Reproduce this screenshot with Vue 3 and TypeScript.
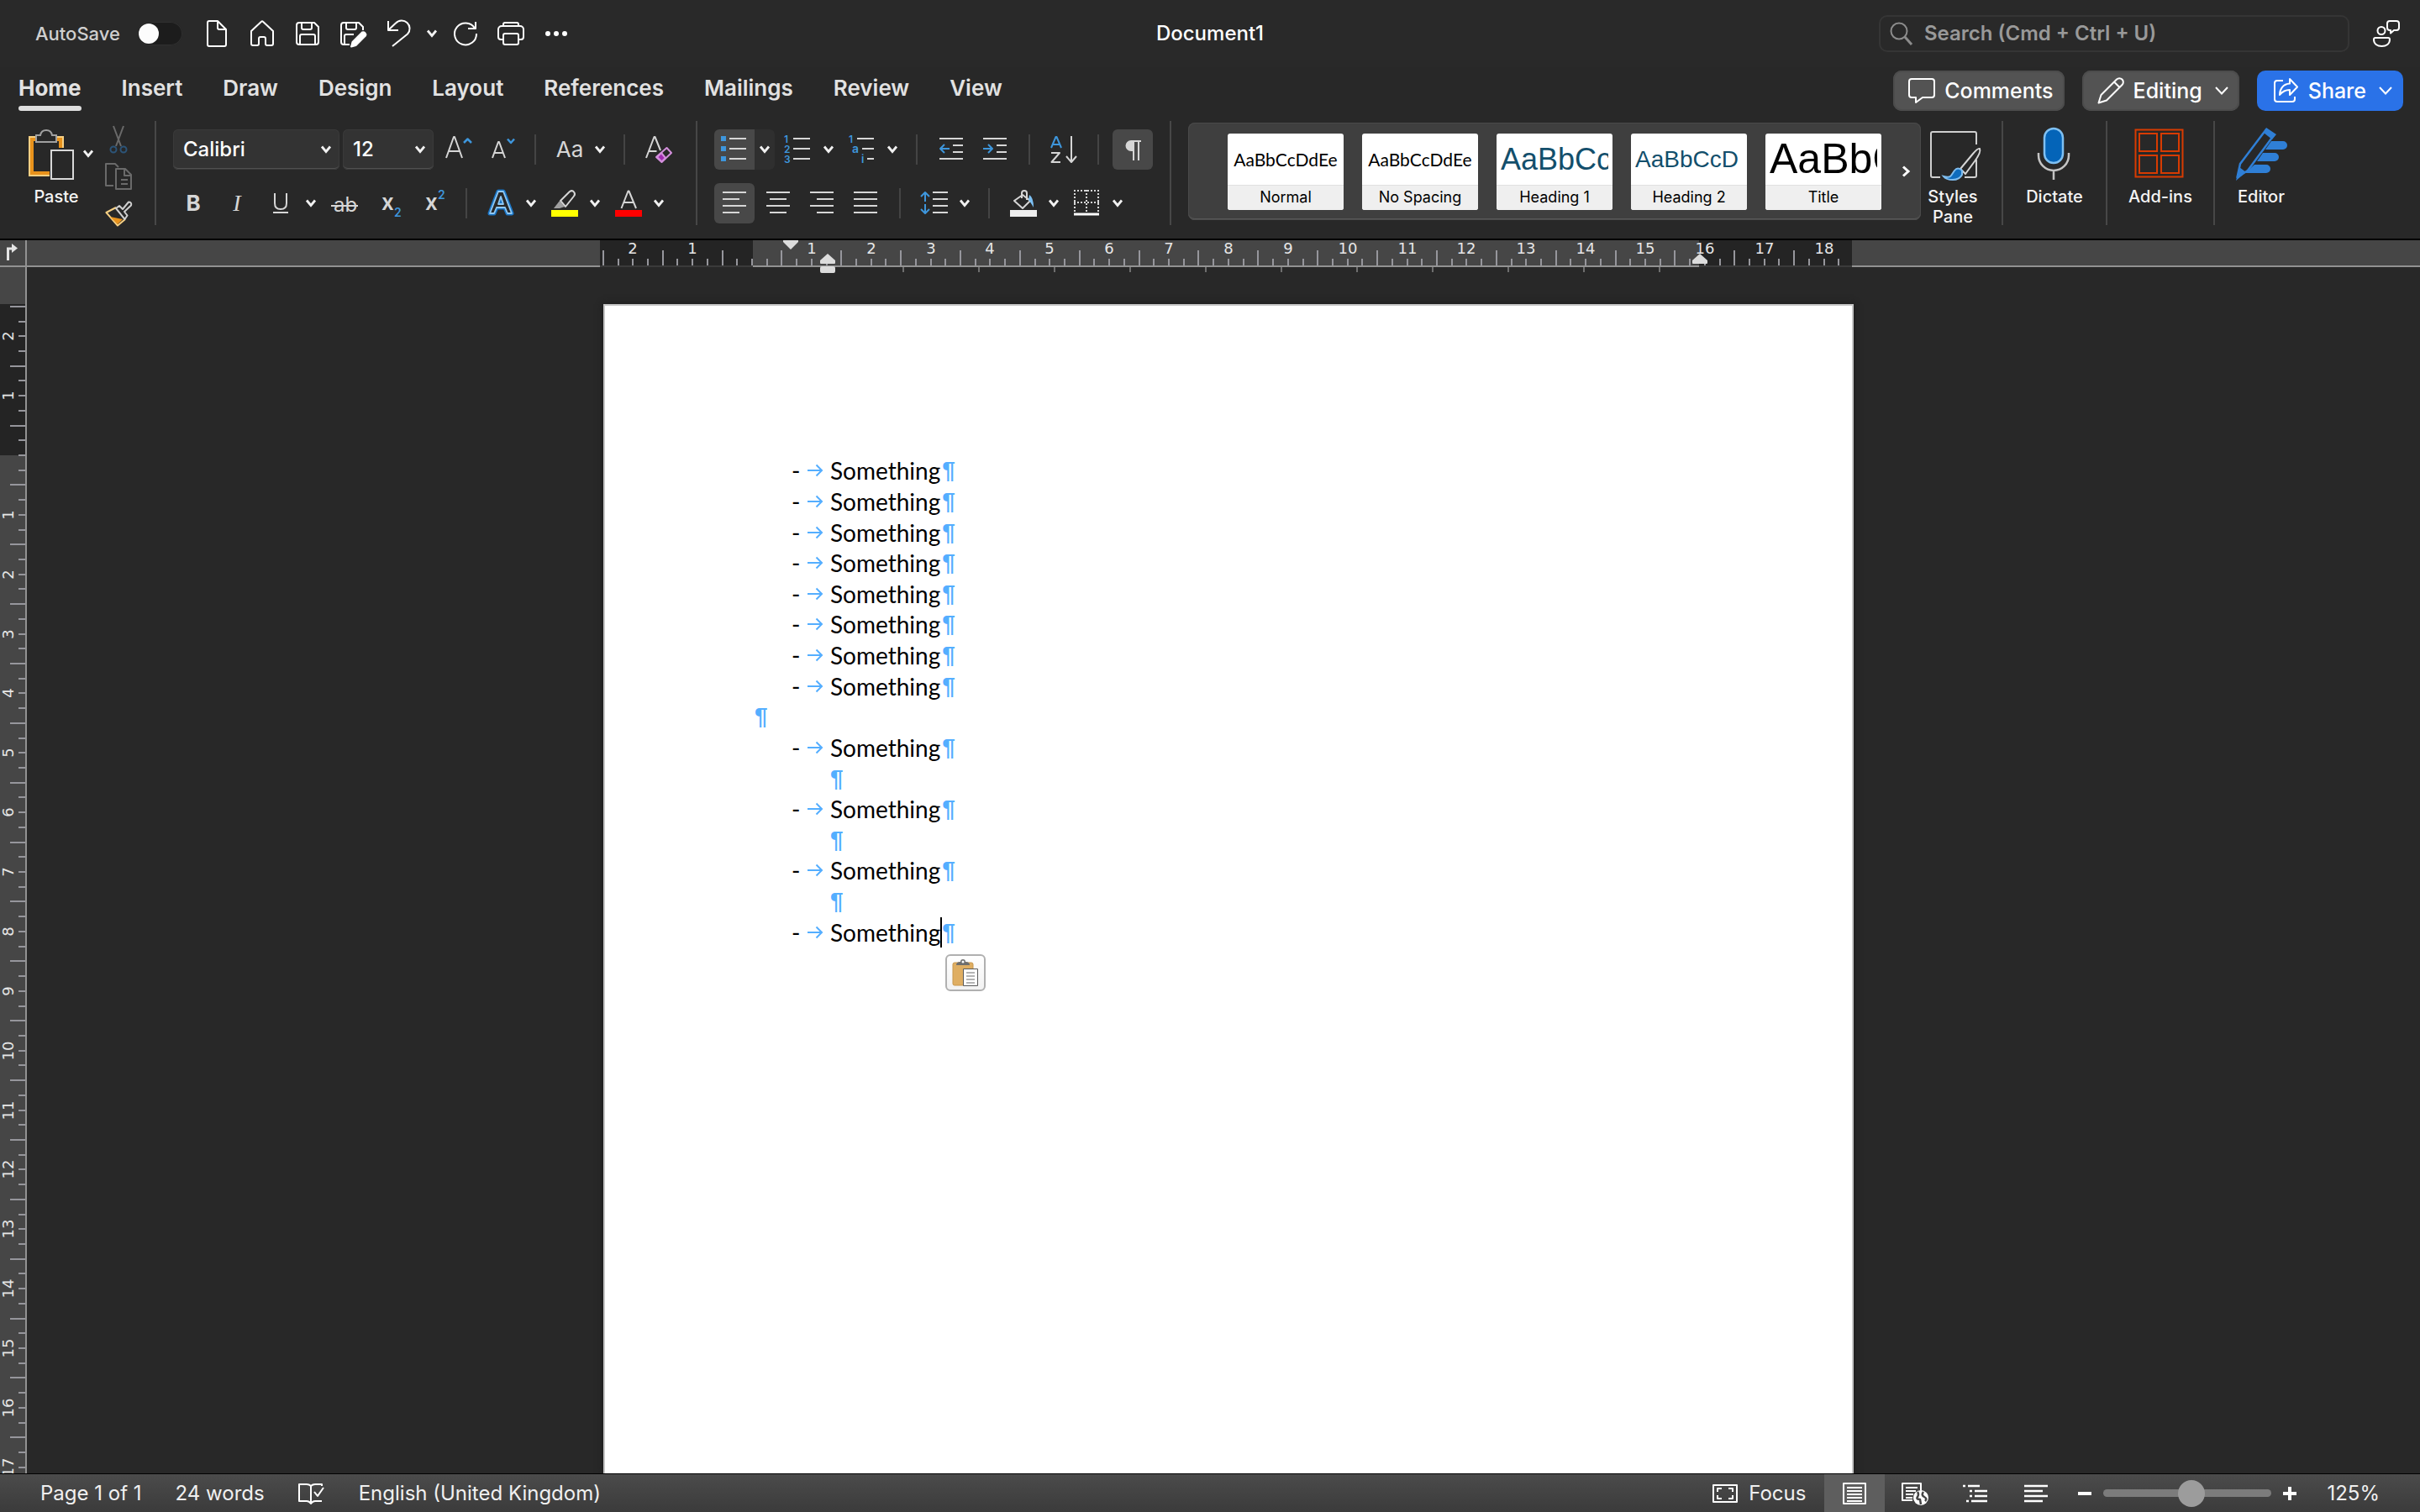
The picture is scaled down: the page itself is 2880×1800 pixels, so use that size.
<script setup lang="ts">
import { h, ref, type FunctionalComponent } from 'vue'

const Chevron: FunctionalComponent = () =>
  h('svg', { class: 'chevron', viewBox: '0 0 14 10', 'aria-hidden': 'true' }, [
    h('path', { d: 'M2 1.5 7 7.5 12 1.5', fill: 'none', stroke: 'currentColor', 'stroke-width': 2.8 }),
  ])

const tabs = ['Home', 'Insert', 'Draw', 'Design', 'Layout', 'References', 'Mailings', 'Review', 'View']
const activeTab = ref('Home')

const styleCards = [
  { name: 'Normal', sample: 'AaBbCcDdEe', look: 'body' },
  { name: 'No Spacing', sample: 'AaBbCcDdEe', look: 'body' },
  { name: 'Heading 1', sample: 'AaBbCc', look: 'h1' },
  { name: 'Heading 2', sample: 'AaBbCcD', look: 'h2' },
  { name: 'Title', sample: 'AaBbC', look: 'title' },
]

type Line = { kind: 'item' | 'blank' | 'indented'; caret?: boolean }
const item: Line = { kind: 'item' }
const lines: Line[] = [
  ...Array.from({ length: 8 }, () => item),
  { kind: 'blank' },
  item,
  { kind: 'indented' },
  item,
  { kind: 'indented' },
  item,
  { kind: 'indented' },
  { kind: 'item', caret: true },
]

/* One centimetre on screen at 125 % zoom. */
const CM = 1800 / 25.4

function ticks(from: number, to: number) {
  const out: { at: number; long: boolean }[] = []
  for (let q = from * 4; q <= to * 4; q++) {
    out.push({ at: Math.round((q / 4) * CM), long: Math.abs(q % 4) === 2 })
  }
  return out
}
function labels(from: number, to: number) {
  const out: { at: number; text: number }[] = []
  for (let n = from; n <= to; n++) {
    if (n !== 0) out.push({ at: Math.round(n * CM), text: Math.abs(n) })
  }
  return out
}
const hTicks = ticks(-2.5, 18.25)
const hLabels = labels(-2, 18)
const vTicks = ticks(-2.5, 17.5)
const vLabels = labels(-2, 17)
const tabStops = Array.from({ length: 11 }, (_, i) => 180 + i * 90)

const autoSave = ref(false)
const font = ref('Calibri')
const fontSize = ref('12')
const zoom = ref(53)
</script>

<template>
  <div class="app">
    <header class="titlebar">
      <div class="quick">
        <label class="autosave">
          <span>AutoSave</span>
          <input v-model="autoSave" type="checkbox" role="switch" class="switch" />
        </label>
        <div class="quick-icons">
          <button aria-label="New document">
            <svg class="i" viewBox="0 0 32 32"><path d="M7 1h10l10 10v18a2 2 0 0 1-2 2H7a2 2 0 0 1-2-2V3a2 2 0 0 1 2-2zM17 1v8a2 2 0 0 0 2 2h8" /></svg>
          </button>
          <button aria-label="Home">
            <svg class="i" viewBox="0 0 32 32"><path d="M3 13 15 1.700q1-1 2 0L29 13v15a2 2 0 0 1-2 2h-5a2 2 0 0 1-2-2v-6a2 2 0 0 0-2-2h-4a2 2 0 0 0-2 2v6a2 2 0 0 1-2 2H5a2 2 0 0 1-2-2z" /></svg>
          </button>
          <button aria-label="Save">
            <svg class="i" viewBox="0 0 32 32"><path d="M6 3h18l5 5v18a3 3 0 0 1-3 3H6a3 3 0 0 1-3-3V6a3 3 0 0 1 3-3zM9 3v6a2 2 0 0 0 2 2h8a2 2 0 0 0 2-2V3M7 29V19a2 2 0 0 1 2-2h14a2 2 0 0 1 2 2v10" /></svg>
          </button>
          <button aria-label="Save as">
            <svg class="i" viewBox="0 0 32 32"><path d="M12 29H5a3 3 0 0 1-3-3V6a3 3 0 0 1 3-3h18l5 5v4M8 3v6a2 2 0 0 0 2 2h8a2 2 0 0 0 2-2V3M6 29V19a2 2 0 0 1 2-2h9" /><path d="M27 14.500a3 3 0 0 1 4 4L19.500 30l-5.500 1.500 1.500-5.500z" fill="#fff" /></svg>
          </button>
          <button aria-label="Undo">
            <svg class="i" viewBox="0 0 32 32"><path d="M4 1v11h12M4.500 11.500 13 3.500a9.500 9.500 0 0 1 14 13L9 31" /></svg>
          </button>
          <button class="narrow" aria-label="Undo history"><Chevron /></button>
          <button aria-label="Redo">
            <svg class="i" viewBox="0 0 32 32"><path d="M28 2v8h-9M27 9.500A13 13 0 1 0 29 16" /></svg>
          </button>
          <button aria-label="Print">
            <svg class="i" viewBox="0 0 32 32"><path d="M7 23H4a3 3 0 0 1-3-3V11a4 4 0 0 1 4-4h22a4 4 0 0 1 4 4v9a3 3 0 0 1-3 3h-3M7 7V5a2 2 0 0 1 2-2h14a2 2 0 0 1 2 2v2M9 16h14a2 2 0 0 1 2 2v9a2 2 0 0 1-2 2H9a2 2 0 0 1-2-2v-9a2 2 0 0 1 2-2z" /></svg>
          </button>
          <button aria-label="More commands">
            <svg class="i" viewBox="0 0 32 32"><g fill="#fff" stroke="none"><circle cx="6" cy="16" r="3" /><circle cx="16" cy="16" r="3" /><circle cx="26" cy="16" r="3" /></g></svg>
          </button>
        </div>
      </div>
      <h1>Document1</h1>
      <div class="title-right">
        <label class="search">
          <svg class="i grey" viewBox="0 0 32 32"><circle cx="12" cy="13" r="9.500" /><path d="m19 20 8 9" stroke-width="3" /></svg>
          <input type="search" aria-label="Search" placeholder="Search (Cmd + Ctrl + U)" />
        </label>
        <button class="people" aria-label="Presence">
          <svg class="i" viewBox="0 0 32 32"><circle cx="10" cy="12.500" r="4.500" /><path d="M3 21h15a2 2 0 0 1 2 2c0 5-4 8-9.500 8S1 28 1 23a2 2 0 0 1 2-2zM20 1h8a3 3 0 0 1 3 3v5a3 3 0 0 1-3 3h-3l-4 3.500V12h-1a3 3 0 0 1-3-3V4a3 3 0 0 1 3-3z" /></svg>
        </button>
      </div>
    </header>

    <nav class="tabbar">
      <div class="tabs">
        <button v-for="t in tabs" :key="t" :class="{ active: t === activeTab }" @click="activeTab = t">{{ t }}</button>
      </div>
      <div class="actions">
        <button class="pill">
          <svg class="i" viewBox="0 0 32 32"><path d="M4 2h24a3 3 0 0 1 3 3v16a3 3 0 0 1-3 3H17l-8 6v-6H4a3 3 0 0 1-3-3V5a3 3 0 0 1 3-3z" /></svg>
          Comments
        </button>
        <button class="pill">
          <svg class="i" viewBox="0 0 32 32"><path d="M23 2.500a4.500 4.500 0 0 1 6.500 6.500L11 27.500 1.500 30.500 4.500 21zM20 5.500l6.500 6.500" /></svg>
          Editing
          <svg class="thin" viewBox="0 0 16 10"><path d="m1 1 7 7.500L15 1" /></svg>
        </button>
        <button class="pill share">
          <svg class="i" viewBox="0 0 32 32"><path d="M13 4H6a3 3 0 0 0-3 3v19a3 3 0 0 0 3 3h18a3 3 0 0 0 3-3v-3M21 2l9 9.500-9 9.500v-6c-5 0-8.500 1.500-12 6C9 14 13 8 21 7.500z" /></svg>
          Share
          <svg class="thin" viewBox="0 0 16 10"><path d="m1 1 7 7.500L15 1" /></svg>
        </button>
      </div>
    </nav>

    <section class="ribbon" aria-label="Home ribbon">
      <div class="group paste-group">
        <button class="big paste">
          <svg class="i60" viewBox="0 0 60 60">
            <path d="M5 9H-2V55H22M31 9H38V22" stroke="#f7d083" stroke-width="2" />
            <path d="M5 12H1V52H22M31 12H35V22" stroke="#e8921c" stroke-width="4" />
            <path d="M6 15V7h5q1-6 7-6t7 6h5v8z" stroke="#a0a0a0" stroke-width="2" fill="#282828" />
            <path d="M24 25h26v34H24z" stroke="#d8d8d8" stroke-width="2" fill="#282828" />
          </svg>
          Paste
        </button>
        <button class="split" aria-label="Paste options"><Chevron /></button>
        <div class="clip">
          <button aria-label="Cut">
            <svg class="i" viewBox="0 0 32 32"><path d="m10 0 9 24M22 0l-9 24" stroke="#6a6a6a" /><circle cx="10" cy="28" r="3.500" stroke="#2c5478" /><circle cx="22" cy="28" r="3.500" stroke="#2c5478" /></svg>
          </button>
          <button aria-label="Copy">
            <svg class="i dim" viewBox="0 0 32 32"><path d="M10 27H1V1h11l4 4M13 7h11l7 7v17H13zM23 7v8h8M19 20h8M19 25h8" /></svg>
          </button>
          <button aria-label="Format painter">
            <svg class="i" viewBox="0 0 32 32"><path d="M13 9 1.500 15 15 30.500 24 23" stroke="#f7d083" /><path d="m6 20 15 3-6 6z" fill="#e8921c" stroke="none" /><path d="m13 10 4-3 4 4 7-8.500q4 0 3 4L23 14l3.500 4.500-3 4.500z" stroke="#cfcfcf" fill="#282828" /></svg>
          </button>
        </div>
      </div>
      <i class="rule"></i>

      <div class="group rows">
        <div class="row">
          <label class="combo font">
            <select v-model="font" aria-label="Font"><option>Calibri</option></select><Chevron />
          </label>
          <label class="combo size">
            <select v-model="fontSize" aria-label="Font size"><option>12</option></select><Chevron />
          </label>
          <button class="tool" aria-label="Grow font">
            <svg class="i" viewBox="0 0 32 32"><path d="m3 26 9-25h1l9 25M6.500 18h12" /><path class="bl" d="m24 8 4.500-4.500L33 8" stroke-width="2.500" /></svg>
          </button>
          <button class="tool" aria-label="Shrink font">
            <svg class="i" viewBox="0 0 32 32"><path d="m6 26 7-19h1l7 19M8.500 20h10" /><path class="bl" d="m24 3.500 4 4.500 4-4.500" stroke-width="2.500" /></svg>
          </button>
          <i class="sep"></i>
          <button class="tool glyph" aria-label="Change case">Aa</button>
          <button class="split" aria-label="Case options"><Chevron /></button>
          <i class="sep"></i>
          <button class="tool" aria-label="Clear formatting">
            <svg class="i" viewBox="0 0 32 32"><path d="m1 26 9.500-25h1L18 17M4.500 18h9" /><path d="M25.500 14 31 20 19.500 31 13 25z" stroke="#d38fdc" /><path d="m14 25 5-5 5 6-4.500 4.500z" fill="#a02bb0" stroke="#d38fdc" /></svg>
          </button>
        </div>
        <div class="row">
          <button class="tool glyph bold" aria-label="Bold">B</button>
          <button class="tool glyph ital" aria-label="Italic">I</button>
          <button class="tool" aria-label="Underline">
            <svg class="i" viewBox="0 0 32 32"><path d="M9 4v12q0 7 7 7t7-7V4M7 27h18" /></svg>
          </button>
          <button class="split" aria-label="Underline options"><Chevron /></button>
          <button class="tool" aria-label="Strikethrough">
            <svg class="i" viewBox="0 0 32 32"><text class="letter light" x="3" y="26" font-size="24">ab</text><path d="M0 19h32" /></svg>
          </button>
          <button class="tool" aria-label="Subscript">
            <svg class="i" viewBox="0 0 32 32"><text class="letter" x="8" y="24" font-size="26">x</text><text class="num" x="23" y="32" font-size="14">2</text></svg>
          </button>
          <button class="tool" aria-label="Superscript">
            <svg class="i" viewBox="0 0 32 32"><text class="letter" x="8" y="24" font-size="26">x</text><text class="num" x="23" y="11" font-size="14">2</text></svg>
          </button>
          <i class="sep"></i>
          <button class="tool" aria-label="Text effects">
            <svg class="i" viewBox="0 0 32 32"><path d="M3 28 13 2h6l10 26h-5l-3-7H11l-3 7zM13 17h6l-3-9z" stroke="#1a74c4" stroke-width="5" /><path d="M3 28 13 2h6l10 26h-5l-3-7H11l-3 7zM13 17h6l-3-9z" stroke="#8fc8f4" stroke-width="1.800" fill="#282828" fill-rule="evenodd" /></svg>
          </button>
          <button class="split" aria-label="Text effect options"><Chevron /></button>
          <button class="tool" aria-label="Highlight">
            <svg class="i" viewBox="0 0 32 32"><path d="m11 13 11-11q3-2 5 .500t0 5L17 20z" /><path d="m10 13 6 7-6 2H3z" fill="#a0a0a0" stroke="none" /><path d="M0 24h32v8H0z" fill="#ff0" stroke="none" /></svg>
          </button>
          <button class="split" aria-label="Highlight colours"><Chevron /></button>
          <button class="tool" aria-label="Font colour">
            <svg class="i" viewBox="0 0 32 32"><path d="m7.500 22 8-20.500h1L25 22M10.500 15h11" /><path d="M0 24h32v8H0z" fill="red" stroke="none" /></svg>
          </button>
          <button class="split" aria-label="Font colours"><Chevron /></button>
        </div>
      </div>
      <i class="rule"></i>

      <div class="group rows">
        <div class="row">
          <button class="tool on left" aria-label="Bullets">
            <svg class="i" viewBox="0 0 32 32"><path d="M0 0h6v6H0zM0 12h6v6H0zM0 24h6v6H0z" fill="#3e96dc" stroke="none" /><path d="M10 3h20M10 15h20M10 27h20" /></svg>
          </button>
          <button class="split half" aria-label="Bullet library"><Chevron /></button>
          <button class="tool" aria-label="Numbering">
            <svg class="i" viewBox="0 0 32 32"><text class="num" x="-1" y="8" font-size="12">1</text><text class="num" x="-1" y="20" font-size="12">2</text><text class="num" x="-1" y="32" font-size="12">3</text><path d="M10 3h20M10 15h20M10 27h20" /></svg>
          </button>
          <button class="split" aria-label="Number library"><Chevron /></button>
          <button class="tool" aria-label="Multilevel list">
            <svg class="i" viewBox="0 0 32 32"><text class="num" x="0" y="8" font-size="12">1</text><text class="num" x="4" y="20" font-size="14">a</text><text class="num" x="15" y="32" font-size="13">i</text><path d="M10 3h20M16 15h14M22 27h8" /></svg>
          </button>
          <button class="split" aria-label="Multilevel library"><Chevron /></button>
          <i class="sep"></i>
          <button class="tool" aria-label="Decrease indent">
            <svg class="i" viewBox="0 0 32 32"><path d="M2 3h28M18 11h12M18 19h12M2 27h28" /><path class="bl" d="M14 15H3m5-5-5 5 5 5" /></svg>
          </button>
          <button class="tool" aria-label="Increase indent">
            <svg class="i" viewBox="0 0 32 32"><path d="M2 3h28M18 11h12M18 19h12M2 27h28" /><path class="bl" d="M2 15h11m-5-5 5 5-5 5" /></svg>
          </button>
          <i class="sep"></i>
          <button class="tool" aria-label="Sort">
            <svg class="i" viewBox="0 0 32 32"><path class="bl" d="m1 14 5.500-13h1L13 14M3 10h8" /><path d="M1 20h10L1.500 31H12M25 0v30m-6-6 6 7 6-7" /></svg>
          </button>
          <i class="sep"></i>
          <button class="tool on" aria-label="Show formatting marks">
            <svg class="i" viewBox="0 0 32 32"><path d="M14 5h12v2h-2v22h-2V7h-4v22h-2V18h-2a6.500 6.500 0 0 1 0-13z" fill="#d6d6d6" stroke="none" /></svg>
          </button>
        </div>
        <div class="row">
          <button class="tool on" aria-label="Align left">
            <svg class="i" viewBox="0 0 32 32"><path d="M2 3h28M2 11h20M2 19h28M2 27h20" /></svg>
          </button>
          <button class="tool" aria-label="Centre">
            <svg class="i" viewBox="0 0 32 32"><path d="M2 3h28M6 11h20M2 19h28M6 27h20" /></svg>
          </button>
          <button class="tool" aria-label="Align right">
            <svg class="i" viewBox="0 0 32 32"><path d="M2 3h28M10 11h20M2 19h28M10 27h20" /></svg>
          </button>
          <button class="tool" aria-label="Justify">
            <svg class="i" viewBox="0 0 32 32"><path d="M2 3h28M2 11h28M2 19h28M2 27h28" /></svg>
          </button>
          <i class="sep"></i>
          <button class="tool" aria-label="Line spacing">
            <svg class="i" viewBox="0 0 32 32"><path d="M14 3h18M14 11h18M14 19h18M14 27h18" /><path class="bl" d="M5 14V3M0 8l5-5 5 5M5 17v11M0 23l5 5 5-5" /></svg>
          </button>
          <button class="split" aria-label="Spacing options"><Chevron /></button>
          <i class="sep"></i>
          <button class="tool" aria-label="Shading">
            <svg class="i" viewBox="0 0 32 32"><path d="m15 6 9 7-9 9-10-9zM14 10V4q0-3 3-3t3 3v8" /><path d="M23 6q5 3 5 15-4-7-6-9z" fill="#7cc0f4" stroke="none" /><path d="M0 24h32v8H0z" fill="#eee" stroke="none" /></svg>
          </button>
          <button class="split" aria-label="Shading colours"><Chevron /></button>
          <button class="tool" aria-label="Borders">
            <svg class="i" viewBox="0 0 32 32"><path d="M0 1h30M0 15h30M1 0v28M15 0v28M29 0v28" stroke="#d6d6d6" stroke-dasharray="2 2" /><path d="M0 29h30" stroke="#fff" stroke-width="3" /></svg>
          </button>
          <button class="split" aria-label="Border options"><Chevron /></button>
        </div>
      </div>
      <i class="rule"></i>

      <div class="gallery">
        <button v-for="s in styleCards" :key="s.name" class="card">
          <span class="sample" :class="s.look">{{ s.sample }}</span>
          <span class="name">{{ s.name }}</span>
        </button>
        <button class="next" aria-label="More styles">
          <svg viewBox="0 0 10 14"><path d="m2 1.500 6 5.500-6 5.500" /></svg>
        </button>
      </div>
      <button class="big pane">
        <svg class="i60" viewBox="-2 0 60 60"><path d="M56 18V5q0-2-2-2H4Q2 3 2 5v50q0 2 2 2h9M56 36v19q0 2-2 2H42" stroke="#cfcfcf" stroke-width="2" /><path d="M60 23q2 4-6 15L43 53l-6-6 15-18q6-7 8-6z" stroke="#d6d6d6" stroke-width="2" fill="#282828" /><path d="M39 49q-5-5-9 0-2 3-4 6t-9 1q3 4 11 4 8 0 11-6z" stroke="#80bdee" stroke-width="2" fill="#0f6cbd" /></svg>
        Styles Pane
      </button>
      <i class="rule"></i>
      <button class="big dictate">
        <svg class="i60" viewBox="0 0 60 60"><rect x="18" y="-1" width="22" height="41" rx="11" fill="#0464b8" stroke="#7fc0f2" stroke-width="2.500" /><path d="M11 28v3a18 18 0 0 0 36 0v-3M29 49v11" stroke="#c4c4c4" stroke-width="2.500" /></svg>
        Dictate
      </button>
      <i class="rule"></i>
      <button class="big addins">
        <svg class="i60" viewBox="0 0 60 60"><path d="M.500.500h56v56h-56zM5 5h21v21H5zM31 5h21v21H31zM5 31h21v21H5zM31 31h21v21H31z" stroke="#d83b01" stroke-width="2" /></svg>
        Add-ins
      </button>
      <i class="rule"></i>
      <button class="big editor">
        <svg class="i60" viewBox="0 0 60 60"><path d="M42 14h14a5 5 0 0 1 0 10H35zM32 28h14a5 5 0 0 1 0 10H25zM22 42h14a5 5 0 0 1 0 10H11z" fill="#2f7fd6" /><path d="M36 0 5 41 1.500 57 14 49 45 7z" fill="#282828" stroke="#2f7fd6" stroke-width="2.500" stroke-linejoin="round" /><path d="m36-2 12 8-5 6-10-8zM4 45l-4 16 12-10z" fill="#2f7fd6" /></svg>
        Editor
      </button>
    </section>

    <main class="workspace">
      <div class="corner">
        <svg viewBox="0 0 30 30"><path d="M9.500 24V10H15" /><path d="m14 4 7 5.500-7 5.500z" fill="#e4e4e4" stroke="none" /></svg>
      </div>
      <div class="hruler">
        <svg class="hscale" viewBox="0 0 1488 32">
          <path class="off" d="M-4 0H178V32H-4zM1304 0H1486V32H1304z" />
          <path class="offline" d="M-4 31H178M1304 31H1486" />
          <g transform="translate(177 0)">
            <line v-for="t in hTicks" :key="t.at" :x1="t.at" :x2="t.at" :y1="t.long ? 12 : 22" y2="30" />
            <line v-for="s in tabStops" :key="'s' + s" class="stop" :x1="s" :x2="s" y1="32" y2="38" />
            <text v-for="l in hLabels" :key="'l' + l.at" :x="l.at" y="16">{{ l.text }}</text>
            <path class="marker" d="M37 0h18v2l-9 9-9-9zM81 27v-3l9-8 9 8v3q0 1-1 1H82q-1 0-1-1zM83 31h14q2 0 2 2v4q0 2-2 2H83q-2 0-2-2v-4q0-2 2-2zM1119 27v-3l9-8 9 8v3q0 1-1 1h-16q-1 0-1-1z" />
          </g>
        </svg>
      </div>
      <div class="vruler">
        <svg>
          <path class="off" d="M0 44H32V224H0z" />
          <path class="offline" d="M31 44V224" />
          <g transform="translate(0 224)">
            <line v-for="t in vTicks" :key="t.at" :x1="t.long ? 12 : 22" x2="30" :y1="t.at" :y2="t.at" />
            <text v-for="l in vLabels" :key="'l' + l.at" :transform="`translate(16 ${l.at}) rotate(-90)`">{{ l.text }}</text>
          </g>
        </svg>
      </div>
      <div class="canvas">
        <article class="page">
          <div class="lines">
            <p v-for="(l, n) in lines" :key="n" :class="l.kind">
              <template v-if="l.kind === 'item'">
                <span class="bullet">
                  <span class="dash">-</span>
                  <svg class="arrow" viewBox="0 0 18 16"><path d="M0 8h17M10.500 1.500 17 8l-6.500 6.500" /></svg>
                </span>
                <span>Something</span>
              </template>
              <span class="mark">
                <i v-if="l.caret" class="caret"></i>¶
                <button v-if="l.caret" class="paste-options" aria-label="Paste options">
                  <svg viewBox="0 0 32 34">
                    <rect x="1" y="5" width="24" height="27" rx="2" fill="#dfae62" stroke="#c8974c" />
                    <path d="M5 8q0-4 5-4 0-3 3-3t3 3q5 0 5 4z" fill="#6e6e6e" /><circle cx="13" cy="4" r="1.500" fill="#fff" />
                    <path d="M13.500 12.500h17v20h-17z" fill="#fff" stroke="#5a5a5a" />
                    <path d="M17 17h10M17 21h10M17 25h10M17 29h10" stroke="#b4b4b4" stroke-width="2" />
                  </svg>
                </button>
              </span>
            </p>
          </div>
        </article>
      </div>
    </main>

    <footer class="status">
      <div class="status-left">
        <button>Page 1 of 1</button>
        <button>24 words</button>
        <button aria-label="Proofing">
          <svg class="i" viewBox="0 0 32 32"><path d="M15 7q-2-2-5-2H1v20h9q3 0 5 3 2-3 5-3h8M15 7v21M15 7q2-2 5-2h8v2M19 14l4 5 7-10" /></svg>
        </button>
        <button>English (United Kingdom)</button>
      </div>
      <div class="status-right">
        <button class="focus">
          <svg class="i" viewBox="0 0 32 32"><path d="M2 6h28v20H2zM7 14v-4h5M20 10h5v4M25 18v4h-5M12 22H7v-4" /></svg>
          Focus
        </button>
        <button class="view on" aria-label="Print layout">
          <svg class="i" viewBox="0 0 32 32"><path d="M3 4h26v24H3zM7 9h18M7 13h18M7 17h18M7 21h18M7 25h18" /></svg>
        </button>
        <button class="view" aria-label="Web layout">
          <svg class="i" viewBox="0 0 32 32"><path d="M13 24H1V4h22v8M5 9h14M5 13h12M5 17h9M5 21h8" /><circle cx="23" cy="21" r="9" fill="#fff" stroke="none" /><path d="M19 14q2 3 0 6t3 3l1 6M26 14q-3 4 1 6t1 5" stroke="#444" stroke-width="2.500" /></svg>
        </button>
        <button class="view" aria-label="Outline">
          <svg class="i" viewBox="0 0 32 32"><path d="M1 7h3M7 7h14M9 13h3M15 13h15M9 19h3M15 19h15M5 25h3M11 25h19" stroke-width="2.500" /></svg>
        </button>
        <button class="view" aria-label="Draft">
          <svg class="i" viewBox="0 0 32 32"><path d="M2 7h28M2 13h22M2 19h28M2 25h22" stroke-width="2.500" /></svg>
        </button>
        <button class="step" aria-label="Zoom out">
          <svg viewBox="0 0 18 18"><path d="M1 9h16" /></svg>
        </button>
        <input v-model="zoom" class="slider" type="range" min="0" max="100" aria-label="Zoom" />
        <button class="step" aria-label="Zoom in">
          <svg viewBox="0 0 18 18"><path d="M1 9h16M9 1v16" /></svg>
        </button>
        <button class="percent">125%</button>
      </div>
    </footer>
  </div>
</template>

<style>
html,
body {
  background: #282828;
}
</style>

<style scoped>
.app {
  height: 100vh;
  display: flex;
  flex-direction: column;
  overflow: hidden;
  background: #282828;
  color: #e2e2e2;
  font: 500 24px/32px Inter, 'Liberation Sans', sans-serif;
}
.app * {
  box-sizing: border-box;
}
button {
  display: flex;
  align-items: center;
  justify-content: center;
  padding: 0;
  border: 0;
  background: none;
  color: inherit;
  font: inherit;
  white-space: nowrap;
}
svg {
  display: block;
  flex: none;
  overflow: visible;
  fill: none;
  stroke-linecap: butt;
}
.i {
  width: 32px;
  height: 32px;
  stroke: #fff;
  stroke-width: 2;
  stroke-linejoin: round;
}
.i60 {
  width: 60px;
  height: 60px;
}
.grey {
  stroke: #8c8c8c;
}
.i.dim {
  stroke: #6a6a6a;
}
.bl {
  stroke: #3e96dc;
}
.num,
.letter {
  fill: #3e96dc;
  stroke: none;
  font-weight: 600;
}
.letter {
  fill: #d6d6d6;
}
.light {
  font-weight: 400;
}
.chevron {
  width: 14px;
  height: 10px;
  color: #f2f2f2;
}

/* Title bar */
.titlebar {
  flex: none;
  height: 80px;
  display: grid;
  grid-template-columns: 1fr auto 1fr;
  align-items: center;
  background: #292929;
}
.quick,
.quick-icons,
.title-right,
.autosave {
  display: flex;
  align-items: center;
}
.quick {
  padding-left: 42px;
  gap: 14px;
}
.autosave {
  gap: 20px;
  font-size: 22px;
  color: #cfcfcf;
}
.switch {
  appearance: none;
  width: 54px;
  height: 28px;
  margin: 0;
  padding: 2px;
  border-radius: 14px;
  background: #1c1c1c;
  box-shadow: inset 0 0 0 1px #303030;
}
.switch::before {
  content: '';
  display: block;
  width: 24px;
  height: 24px;
  border-radius: 50%;
  background: #fcfcfc;
}
.quick-icons button {
  width: 54px;
  height: 48px;
}
.quick-icons .narrow {
  width: 26px;
}
h1 {
  margin: 0;
  font-size: 24px;
  font-weight: 500;
  color: #fff;
}
.title-right {
  justify-content: flex-end;
  padding-right: 24px;
  gap: 28px;
}
.search {
  display: flex;
  align-items: center;
  gap: 10px;
  width: 560px;
  height: 44px;
  padding: 0 10px;
  border: 2px solid #353535;
  border-radius: 10px;
}
.search input {
  flex: 1;
  min-width: 0;
  padding: 0;
  border: 0;
  outline: 0;
  background: none;
  color: #fff;
  font: inherit;
  font-weight: 600;
}
.search input::placeholder {
  color: #999;
}

/* Tabs */
.tabbar {
  flex: none;
  height: 60px;
  display: flex;
  justify-content: space-between;
  padding: 4px 20px 8px 22px;
}
.tabs {
  display: flex;
  gap: 48px;
}
.tabs button {
  flex-direction: column;
  align-items: stretch;
  justify-content: space-between;
  padding-top: 5px;
  font-size: 26px;
  font-weight: 600;
}
.tabs button::after {
  content: '';
  height: 6px;
  border-radius: 3px;
}
.tabs .active {
  font-weight: 700;
}
.tabs .active::after {
  background: #dedede;
}
.actions {
  display: flex;
  gap: 21px;
}
.pill {
  gap: 11px;
  height: 48px;
  padding: 0 13px 0 18px;
  border-radius: 10px;
  background: #535353;
  box-shadow: inset 0 0 0 2px #4c4c4c;
  color: #fff;
  font-size: 25px;
}
.share {
  background: #2a72e8;
  box-shadow: none;
}
.thin {
  width: 16px;
  height: 10px;
  margin-left: 4px;
  stroke: #fff;
  stroke-width: 2;
}

/* Ribbon */
.ribbon {
  flex: none;
  height: 146px;
  display: flex;
  align-items: flex-start;
  padding: 4px 38px 0;
  border-bottom: 2px solid #000;
}
.rule {
  flex: none;
  width: 2px;
  height: 124px;
  margin: 0 20px;
  background: #474747;
}
.group {
  flex: none;
  display: flex;
  padding-top: 10px;
}
.rows {
  flex-direction: column;
  gap: 16px;
}
.row {
  display: flex;
  align-items: center;
  height: 48px;
}
.tool {
  width: 48px;
  height: 48px;
  border-radius: 6px;
  color: #d6d6d6;
}
.tool .i {
  stroke: #d6d6d6;
}
.tool .i .bl {
  stroke: #3e96dc;
}
.tool + .tool,
.split + .tool,
.combo + .combo,
.combo + .tool {
  margin-left: 4px;
}
.on {
  background: #484848;
}
.left {
  border-radius: 6px 0 0 6px;
}
.split {
  width: 24px;
  height: 48px;
}
.half {
  border-radius: 0 6px 6px 0;
  background: #2f2f2f;
}
.sep {
  width: 2px;
  height: 36px;
  margin: 0 16px;
  background: #444;
}
.glyph {
  font-size: 26px;
  font-weight: 400;
}
.bold {
  font-weight: 700;
}
.ital {
  font-family: 'Liberation Serif', serif;
  font-style: italic;
  font-size: 28px;
}
.combo {
  position: relative;
  height: 48px;
  display: flex;
  align-items: center;
  justify-content: space-between;
  padding: 0 9px 0 12px;
  border-radius: 6px;
  background: #333;
  box-shadow: inset 0 0 0 1px #3a3a3a, inset 0 -2px 0 #505050;
}
.combo.font {
  width: 198px;
}
.combo.size {
  width: 108px;
}
.combo select {
  flex: 1;
  min-width: 0;
  appearance: none;
  border: 0;
  padding: 0;
  background: none;
  color: #fff;
  font: inherit;
}
.big {
  flex: none;
  flex-direction: column;
  justify-content: flex-start;
  gap: 8px;
  padding-top: 10px;
  color: #f4f4f4;
  font-size: 20px;
  line-height: 24px;
  white-space: normal;
}
.paste-group {
  padding-top: 0;
}
.paste {
  width: 58px;
}
.paste-group .split {
  width: 18px;
  height: 78px;
}
.clip {
  display: flex;
  flex-direction: column;
  gap: 12px;
  margin-left: 4px;
  padding-top: 6px;
}
.clip button {
  width: 46px;
}
.pane {
  width: 76px;
}
.dictate {
  width: 82px;
}
.addins {
  width: 86px;
}
.editor {
  width: 70px;
}
.gallery {
  flex: none;
  display: flex;
  align-items: center;
  gap: 22px;
  width: 872px;
  height: 116px;
  margin-top: 2px;
  padding-left: 47px;
  border-radius: 8px;
  background: #3f3f3f;
  box-shadow: inset 0 0 0 1px #4a4a4a, inset 0 -2px 0 #585858;
}
.card {
  flex: none;
  flex-direction: column;
  justify-content: flex-start;
  width: 138px;
  height: 91px;
  border-radius: 3px;
  background: #fff;
  color: #000;
  overflow: hidden;
}
.sample {
  width: 128px;
  height: 61px;
  line-height: 61px;
  overflow: hidden;
  text-align: left;
  font-family: 'Liberation Sans', sans-serif;
  font-weight: 400;
}
.sample.body {
  text-align: center;
  font-family: Lato, sans-serif;
  font-size: 21px;
}
.h1 {
  font-size: 36px;
  color: #134f6c;
}
.h2 {
  font-size: 28px;
  color: #134f6c;
}
.title {
  font-size: 50px;
}
.name {
  width: 100%;
  height: 30px;
  border-top: 1px solid #e0e0e0;
  background: #efefef;
  font-size: 18px;
  font-weight: 400;
  line-height: 28px;
}
.next {
  width: 14px;
}
.next svg {
  width: 10px;
  height: 14px;
  stroke: #fff;
  stroke-width: 3;
}

/* Workspace */
.workspace {
  flex: 1;
  min-height: 0;
  display: grid;
  grid-template: 32px 1fr / 32px 1fr;
}
.corner,
.hruler {
  position: relative;
  border-bottom: 2px solid #929292;
  background: #464646;
}
.corner,
.vruler {
  border-right: 2px solid #929292;
  background: #464646;
}
.corner svg {
  width: 30px;
  height: 30px;
  stroke: #e4e4e4;
  stroke-width: 3;
}
.hruler,
.canvas {
  display: flex;
  justify-content: center;
  padding-left: 12px;
}
.hscale {
  width: 1488px;
  height: 32px;
}
.vruler {
  overflow: hidden;
}
.vruler svg {
  width: 32px;
  height: 100%;
  overflow: hidden;
}
.off {
  fill: #242424;
}
.offline {
  stroke: #3a3a3a;
  stroke-width: 2;
}
.workspace line {
  stroke: #96969c;
  stroke-width: 2;
}
.workspace .stop {
  stroke: #6e6e6e;
}
.workspace text {
  fill: #e6e6e6;
  font: 18px 'DejaVu Sans', sans-serif;
  text-anchor: middle;
}
.marker {
  fill: #dcdcdc;
}
.canvas {
  padding-top: 44px;
  min-height: 0;
}
.page {
  flex: none;
  width: 1488px;
  padding: 178px 176px 0;
  border: 2px solid #c6c6c6;
  border-bottom: 0;
  background: #fff;
  box-shadow: 0 0 8px #1c1c1c;
  color: #000;
  font: 400 28px/36px Lato, sans-serif;
}
.lines {
  display: grid;
  grid-auto-rows: 1fr;
  height: 586px;
}
p {
  display: flex;
  align-items: center;
  margin: 0;
}
.item {
  padding-left: 46px;
}
.indented {
  padding-left: 90px;
}
.bullet {
  display: flex;
  align-items: center;
  width: 46px;
}
.dash {
  width: 19px;
}
.arrow {
  width: 18px;
  height: 16px;
  stroke: #54aeff;
  stroke-width: 2;
}
.mark {
  position: relative;
  padding-left: 2px;
  color: #54aeff;
  font-family: 'Liberation Sans', sans-serif;
  font-size: 28px;
  font-weight: 700;
}
.caret {
  position: absolute;
  left: 0;
  top: 0;
  width: 2px;
  height: 36px;
  background: #000;
}
.paste-options {
  position: absolute;
  left: 6px;
  top: 44px;
  width: 48px;
  height: 44px;
  border: 2px solid #b0b0b0;
  border-radius: 6px;
  background: linear-gradient(#fff, #f2f2f2);
}
.paste-options svg {
  width: 32px;
  height: 34px;
}

/* Status bar */
.status {
  flex: none;
  height: 46px;
  display: flex;
  justify-content: space-between;
  border-top: 1px solid #000;
  background: linear-gradient(#4b4b4b, #3b3b3b);
  color: #f0f0f0;
  font-weight: 400;
}
.status-left,
.status-right {
  display: flex;
  align-items: center;
}
.status-left {
  padding-left: 48px;
  gap: 40px;
}
.status-right {
  padding-right: 48px;
}
.focus {
  gap: 12px;
  margin-right: 22px;
}
.view {
  width: 72px;
  height: 45px;
}
.view.on {
  background: #5e5e5e;
}
.step {
  width: 44px;
  height: 45px;
}
.step svg {
  width: 18px;
  height: 18px;
  stroke: #fff;
  stroke-width: 4;
}
.slider {
  appearance: none;
  width: 200px;
  height: 9px;
  margin: 0;
  border-radius: 5px;
  background: #7c7c7c;
}
.slider::-webkit-slider-thumb {
  appearance: none;
  width: 32px;
  height: 32px;
  border-radius: 50%;
  background: #9c9c9c;
}
.percent {
  margin-left: 22px;
}
</style>
